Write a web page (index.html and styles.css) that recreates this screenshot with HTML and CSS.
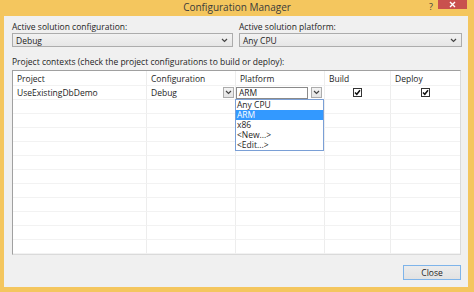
FILE: index.html
```html
<!DOCTYPE html>
<html>
<head>
<meta charset="utf-8">
<link rel="stylesheet" href="styles.css">
</head>
<body>
<div class="window">
  <div class="titlebar">
    <span class="title">Configuration Manager</span>
    <span class="help">?</span>
    <span class="close-x"><svg width="9" height="7" viewBox="0 0 9 7"><path d="M2 1 L7 6 M7 1 L2 6" stroke="#fff" stroke-width="1.4"/></svg></span>
  </div>
  <div class="content">
    <div class="top-row">
      <div class="field">
        <div class="label">Active solution configuration:</div>
        <div class="combo"><span>Debug</span><svg class="chev" width="7" height="5" viewBox="0 0 7 5"><path d="M1 1 L3.5 3.5 L6 1" stroke="#444" stroke-width="1.2" fill="none"/></svg></div>
      </div>
      <div class="field">
        <div class="label">Active solution platform:</div>
        <div class="combo"><span>Any CPU</span><svg class="chev" width="7" height="5" viewBox="0 0 7 5"><path d="M1 1 L3.5 3.5 L6 1" stroke="#444" stroke-width="1.2" fill="none"/></svg></div>
      </div>
    </div>
    <div class="label contexts">Project contexts (check the project configurations to build or deploy):</div>
    <div class="grid">
      <div class="cell head">Project</div>
      <div class="cell head">Configuration</div>
      <div class="cell head">Platform</div>
      <div class="cell head">Build</div>
      <div class="cell head last">Deploy</div>

      <div class="cell">UseExistingDbDemo</div>
      <div class="cell editcell"><span class="flex1">Debug</span><span class="dbtn"><svg width="7" height="5" viewBox="0 0 7 5"><path d="M1 1 L3.5 3.5 L6 1" stroke="#444" stroke-width="1.2" fill="none"/></svg></span></div>
      <div class="cell editcell platform"><span class="tbox">ARM</span><span class="dbtn"><svg width="7" height="5" viewBox="0 0 7 5"><path d="M1 1 L3.5 3.5 L6 1" stroke="#444" stroke-width="1.2" fill="none"/></svg></span>
        <div class="dropdown">
          <div class="opt">Any CPU</div>
          <div class="opt sel">ARM</div>
          <div class="opt">x86</div>
          <div class="opt">&lt;New...&gt;</div>
          <div class="opt">&lt;Edit...&gt;</div>
        </div>
      </div>
      <div class="cell center"><span class="chk"><svg width="7" height="7" viewBox="0 0 7 7"><path d="M1 3.5 L2.8 5.3 L6 1.2" stroke="#111" stroke-width="1.5" fill="none"/></svg></span></div>
      <div class="cell center last"><span class="chk"><svg width="7" height="7" viewBox="0 0 7 7"><path d="M1 3.5 L2.8 5.3 L6 1.2" stroke="#111" stroke-width="1.5" fill="none"/></svg></span></div>

      <div class="cell"></div><div class="cell"></div><div class="cell"></div><div class="cell"></div><div class="cell last"></div>
      <div class="cell"></div><div class="cell"></div><div class="cell"></div><div class="cell"></div><div class="cell last"></div>
      <div class="cell"></div><div class="cell"></div><div class="cell"></div><div class="cell"></div><div class="cell last"></div>
      <div class="cell"></div><div class="cell"></div><div class="cell"></div><div class="cell"></div><div class="cell last"></div>
      <div class="cell"></div><div class="cell"></div><div class="cell"></div><div class="cell"></div><div class="cell last"></div>
      <div class="cell"></div><div class="cell"></div><div class="cell"></div><div class="cell"></div><div class="cell last"></div>
      <div class="cell"></div><div class="cell"></div><div class="cell"></div><div class="cell"></div><div class="cell last"></div>
      <div class="cell"></div><div class="cell"></div><div class="cell"></div><div class="cell"></div><div class="cell last"></div>
      <div class="cell"></div><div class="cell"></div><div class="cell"></div><div class="cell"></div><div class="cell last"></div>
      <div class="cell"></div><div class="cell"></div><div class="cell"></div><div class="cell"></div><div class="cell last"></div>
      <div class="cell"></div><div class="cell"></div><div class="cell"></div><div class="cell"></div><div class="cell last"></div>
    </div>
    <div class="footer">
      <div class="button">Close</div>
    </div>
  </div>
</div>
</body>
</html>
```
FILE: styles.css
```css
html, body {
  margin: 0;
  padding: 0;
}
body {
  width: 474px;
  height: 292px;
  background: #f4c65e;
  font-family: "Open Sans", "Noto Sans", sans-serif;
  font-size: 8.5px;
  color: #1e1e1e;
  overflow: hidden;
}
.window {
  display: flex;
  flex-direction: column;
  height: 292px;
}
.titlebar {
  position: relative;
  height: 16px;
  display: flex;
  justify-content: center;
  align-items: center;
}
.title {
  font-size: 10px;
  color: #3b3b3b;
  margin-top: -2px;
}
.help {
  position: absolute;
  left: 429px;
  top: 1px;
  font-size: 9px;
  color: #3b3b3b;
  line-height: 11px;
}
.close-x {
  position: absolute;
  left: 438px;
  top: 0;
  width: 29px;
  height: 9px;
  background: #c9504e;
  display: flex;
  align-items: center;
  justify-content: center;
}
.content {
  flex: 1;
  margin: 0 6px 5px 4px;
  background: #f0f0f0;
  padding: 4px 7px 0 8px;
  display: flex;
  flex-direction: column;
}
.top-row {
  display: grid;
  grid-template-columns: 221px 223px;
  column-gap: 6px;
}
.label {
  height: 13px;
  line-height: 13px;
  white-space: nowrap;
}
.combo {
  height: 12px;
  border: 1px solid #acacac;
  background: linear-gradient(#f2f2f2, #e6e6e6);
  display: flex;
  align-items: center;
  padding: 0 4px 0 3px;
}
.combo span { flex: 1; }
.contexts {
  margin-top: 8px;
}
.grid {
  margin-top: 2px;
  width: 447px;
  border: 1px solid #a0a0a0;
  border-right-color: #dadada;
  border-bottom-color: #dadada;
  background: #fff;
  display: grid;
  grid-template-columns: 134px 89px 89px 66px 69px;
  grid-template-rows: 15px;
  grid-auto-rows: 14px;
}
.cell {
  border-right: 1px solid #ededed;
  border-bottom: 1px solid #f2f2f2;
  padding: 0 4px;
  display: flex;
  align-items: center;
  white-space: nowrap;
  position: relative;
}
.cell.last { border-right: none; }
.editcell { padding-right: 1px; }
.flex1 { flex: 1; }
.dbtn {
  width: 9px;
  height: 9px;
  border: 1px solid #acacac;
  background: linear-gradient(#f4f4f4, #e4e4e4);
  display: flex;
  align-items: center;
  justify-content: center;
}
.platform { padding-left: 0; padding-right: 2px; gap: 3px; }
.tbox {
  flex: 1;
  height: 10px;
  line-height: 10px;
  border: 1px solid #8a8a8a;
  background: #fff;
  padding-left: 2px;
}
.dropdown {
  position: absolute;
  left: -1px;
  top: 13px;
  width: 87px;
  height: 50px;
  background: #fff;
  border: 1px solid #7a9fd6;
  z-index: 2;
}
.opt {
  height: 10px;
  line-height: 10px;
  padding-left: 1px;
}
.opt.sel {
  background: #3399ff;
  color: #fff;
}
.center { justify-content: center; }
.chk {
  width: 7px;
  height: 7px;
  border: 1px solid #333;
  background: #fff;
  display: flex;
  align-items: center;
  justify-content: center;
}
.footer {
  display: flex;
  justify-content: flex-end;
  margin-top: 10px;
}
.button {
  width: 56px;
  height: 13px;
  line-height: 13px;
  text-align: center;
  border: 1px solid #7eb4ea;
  background: linear-gradient(#ececec, #e2e2e2);
}
```
